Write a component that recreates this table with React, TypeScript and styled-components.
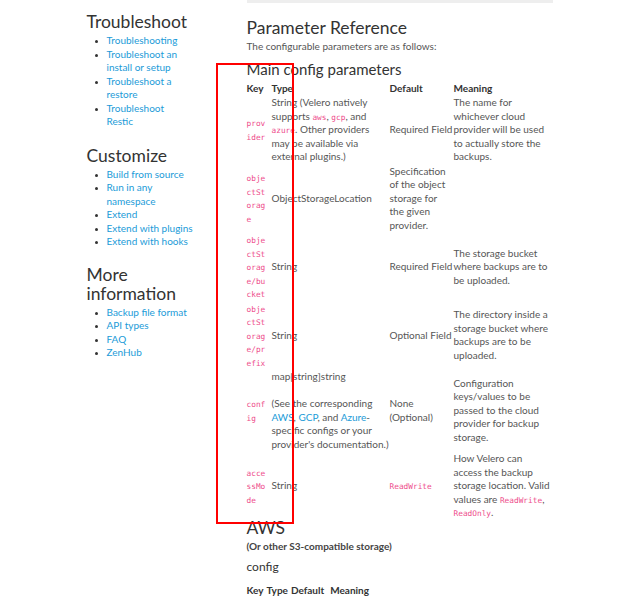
import React from "react";
import styled, { createGlobalStyle } from "styled-components";

const Global = createGlobalStyle`
  html, body { margin: 0; padding: 0; background: #fff; overflow: hidden; }
  body { font-family: Lato, "Open Sans", sans-serif; color: #565656; }
`;

const Page = styled.div`
  width: 466px;
  margin: 0 auto;
  display: flex;
  justify-content: space-between;
  align-items: flex-start;
`;

const Sidebar = styled.nav`
  width: 107px;
  padding-top: 12px;
`;

const SideHeading = styled.h3`
  margin: 0;
  font-size: 17.5px;
  line-height: 19px;
  font-weight: 400;
  color: #333;
`;

const SideList = styled.ul<{ $gapAfter?: number }>`
  margin: 3px 0 ${(p) => p.$gapAfter ?? 0}px 0;
  padding-left: 20px;
  font-size: 10px;
  line-height: 13.5px;
  li::marker { color: #333; font-size: 8px; }
`;

const Link = styled.a`
  color: #1b9bd8;
  text-decoration: none;
`;

const Main = styled.main`
  width: 306px;
`;

const TopBar = styled.div`
  height: 3px;
  background: #eeeeee;
  margin-bottom: 14.5px;
`;

const H2 = styled.h2<{ $mt?: number }>`
  margin: ${(p) => p.$mt ?? 0}px 0 0 0;
  font-size: 17.5px;
  line-height: 19px;
  font-weight: 400;
  color: #333;
`;

const Para = styled.p<{ $bold?: boolean; $mt?: number }>`
  margin: ${(p) => p.$mt ?? 0}px 0 0 0;
  font-size: 10px;
  line-height: 13.5px;
  font-weight: ${(p) => (p.$bold ? 700 : 400)};
  color: ${(p) => (p.$bold ? "#444" : "#565656")};
`;

const H3 = styled.h3<{ $size: number; $mt: number }>`
  margin: ${(p) => p.$mt}px 0 0 0;
  font-size: ${(p) => p.$size}px;
  line-height: ${(p) => p.$size + 2}px;
  font-weight: 400;
  color: #333;
`;

const Table = styled.table<{ $fixed?: boolean; $mt: number }>`
  margin-top: ${(p) => p.$mt}px;
  border-collapse: collapse;
  table-layout: ${(p) => (p.$fixed ? "fixed" : "auto")};
  width: ${(p) => (p.$fixed ? "306px" : "auto")};
  font-size: 10px;
  line-height: 13.5px;
  th {
    text-align: left;
    font-weight: 700;
    color: #333;
    padding: 0 3px 0 0;
    white-space: nowrap;
  }
  td {
    padding: 0.5px 0;
    vertical-align: middle;
  }
`;

const KeyCell = styled.td`
  word-break: break-all;
  padding-right: 3px !important;
`;

const Code = styled.code`
  font-family: "DejaVu Sans Mono", "Liberation Mono", monospace;
  font-size: 7.8px;
  line-height: 1;
  color: #ee4d8c;
`;

const Overlay = styled.div`
  position: absolute;
  left: 216px;
  top: 63px;
  width: 74px;
  height: 457px;
  border: 2px solid #ff0000;
  pointer-events: none;
`;

const rows: {
  key: string;
  type: React.ReactNode;
  def: React.ReactNode;
  meaning: React.ReactNode;
}[] = [
  {
    key: "provider",
    type: (
      <>
        String (Velero natively supports <Code>aws</Code>, <Code>gcp</Code>, and{" "}
        <Code>azure</Code>. Other providers may be available via external plugins.)
      </>
    ),
    def: "Required Field",
    meaning: "The name for whichever cloud provider will be used to actually store the backups.",
  },
  {
    key: "objectStorage",
    type: "ObjectStorageLocation",
    def: "Specification of the object storage for the given provider.",
    meaning: "",
  },
  {
    key: "objectStorage/bucket",
    type: "String",
    def: "Required Field",
    meaning: "The storage bucket where backups are to be uploaded.",
  },
  {
    key: "objectStorage/prefix",
    type: "String",
    def: "Optional Field",
    meaning: "The directory inside a storage bucket where backups are to be uploaded.",
  },
  {
    key: "config",
    type: (
      <>
        map[string]string
        <br />
        <br />
        (See the corresponding <Link href="#">AWS</Link>, <Link href="#">GCP</Link>, and{" "}
        <Link href="#">Azure</Link>-specific configs or your provider's documentation.)
      </>
    ),
    def: "None (Optional)",
    meaning: "Configuration keys/values to be passed to the cloud provider for backup storage.",
  },
  {
    key: "accessMode",
    type: "String",
    def: <Code>ReadWrite</Code>,
    meaning: (
      <>
        How Velero can access the backup storage location. Valid values are{" "}
        <Code>ReadWrite</Code>, <Code>ReadOnly</Code>.
      </>
    ),
  },
];

export default function App() {
  return (
    <>
      <Global />
      <Page>
        <Sidebar>
          <SideHeading>Troubleshoot</SideHeading>
          <SideList $gapAfter={17}>
            <li><Link href="#">Troubleshooting</Link></li>
            <li><Link href="#">Troubleshoot an install or setup</Link></li>
            <li><Link href="#">Troubleshoot a restore</Link></li>
            <li><Link href="#">Troubleshoot<br />Restic</Link></li>
          </SideList>
          <SideHeading>Customize</SideHeading>
          <SideList $gapAfter={16}>
            <li><Link href="#">Build from source</Link></li>
            <li><Link href="#">Run in any namespace</Link></li>
            <li><Link href="#">Extend</Link></li>
            <li><Link href="#">Extend with plugins</Link></li>
            <li><Link href="#">Extend with hooks</Link></li>
          </SideList>
          <SideHeading>More information</SideHeading>
          <SideList>
            <li><Link href="#">Backup file format</Link></li>
            <li><Link href="#">API types</Link></li>
            <li><Link href="#">FAQ</Link></li>
            <li><Link href="#">ZenHub</Link></li>
          </SideList>
        </Sidebar>
        <Main>
          <TopBar />
          <H2>Parameter Reference</H2>
          <Para $mt={3}>The configurable parameters are as follows:</Para>
          <H3 $size={15} $mt={8}>Main config parameters</H3>
          <Table $fixed $mt={4}>
            <colgroup>
              <col style={{ width: 25 }} />
              <col style={{ width: 118 }} />
              <col style={{ width: 64 }} />
              <col style={{ width: 99 }} />
            </colgroup>
            <thead>
              <tr>
                <th>Key</th>
                <th>Type</th>
                <th>Default</th>
                <th>Meaning</th>
              </tr>
            </thead>
            <tbody>
              {rows.map((r) => (
                <tr key={r.key}>
                  <KeyCell>
                    <Code>{r.key}</Code>
                  </KeyCell>
                  <td>{r.type}</td>
                  <td>{r.def}</td>
                  <td>{r.meaning}</td>
                </tr>
              ))}
            </tbody>
          </Table>
          <H2 $mt={-2}>AWS</H2>
          <Para $bold $mt={3}>(Or other S3-compatible storage)</Para>
          <H3 $size={12} $mt={6}>config</H3>
          <Table $mt={10}>
            <thead>
              <tr>
                <th>Key</th>
                <th>Type</th>
                <th>Default</th>
                <th style={{ paddingLeft: 3 }}>Meaning</th>
              </tr>
            </thead>
          </Table>
        </Main>
      </Page>
      <Overlay />
    </>
  );
}
